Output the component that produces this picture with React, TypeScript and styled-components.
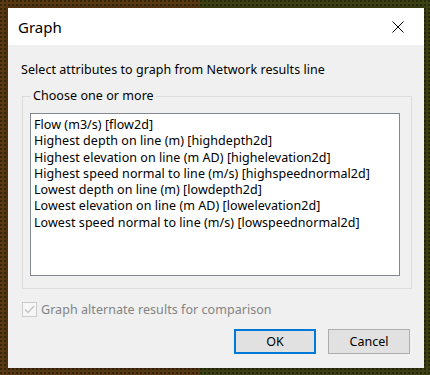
import React from "react";
import styled, { createGlobalStyle } from "styled-components";

const GlobalStyle = createGlobalStyle`
  html, body {
    margin: 0;
    padding: 0;
  }
  body {
    width: 430px;
    height: 375px;
    overflow: hidden;
    background:
      radial-gradient(circle at 1px 1px, rgba(20, 22, 4, 0.55) 0.8px, transparent 1.2px) 200px 0 / 4px 4px,
      linear-gradient(90deg, #5c3a14 0, #5c3a14 200px, #3e4214 200px, #3e4214 100%);
    font-family: "Noto Sans", "Open Sans", sans-serif;
  }
`;

const Desktop = styled.div`
  padding: 8px 6px 7px 8px;
`;

const Window = styled.div`
  width: 416px;
  height: 360px;
  background: #f0f0f0;
  display: flex;
  flex-direction: column;
  box-shadow: 0 0 6px rgba(0, 0, 0, 0.35);
`;

const TitleBar = styled.div`
  height: 37px;
  flex: none;
  background: #ffffff;
  display: flex;
  align-items: center;
  justify-content: space-between;
  padding: 0 0 0 10px;
`;

const Title = styled.span`
  font-size: 15px;
  color: #000;
`;

const CloseButton = styled.div`
  width: 46px;
  height: 37px;
  display: flex;
  align-items: center;
  justify-content: center;
  margin-right: 3px;
`;

const Body = styled.div`
  flex: 1;
  display: flex;
  flex-direction: column;
  padding: 17px 12px 0 14px;
  font-size: 12.5px;
  color: #000;
`;

const Prompt = styled.div`
  margin-left: -1px;
  line-height: 15px;
  height: 15px;
  letter-spacing: 0.05px;
`;

const Group = styled.fieldset`
  margin: 12px 0 0 0;
  padding: 0 11px 12px 7px;
  border: 1px solid #dcdcdc;
  box-sizing: border-box;
`;

const Legend = styled.legend`
  padding: 0 2px;
  margin-left: 1px;
  line-height: 14px;
  letter-spacing: 0.05px;
`;

const ListBox = styled.div`
  margin-top: 10px;
  height: 163px;
  box-sizing: border-box;
  background: #ffffff;
  border: 1px solid #828790;
  padding: 3px 3px;
  display: flex;
  flex-direction: column;
`;

const ListItem = styled.div`
  height: 16.3px;
  line-height: 16px;
  white-space: nowrap;
  letter-spacing: 0.05px;
`;

const CheckRow = styled.div`
  margin-top: 12px;
  display: flex;
  align-items: center;
  gap: 4px;
  height: 16px;
`;

const CheckBox = styled.div`
  width: 13px;
  height: 13px;
  border: 1px solid #cccccc;
  background: #f6f6f6;
  display: flex;
  align-items: center;
  justify-content: center;
`;

const CheckLabel = styled.span`
  color: #838383;
  letter-spacing: 0.05px;
`;

const ButtonRow = styled.div`
  margin-top: 12px;
  display: flex;
  justify-content: flex-end;
  gap: 12px;
  padding-right: 2px;
`;

const Button = styled.div<{ $default?: boolean }>`
  width: 82px;
  height: 25px;
  box-sizing: border-box;
  background: #e1e1e1;
  border: ${(p) => (p.$default ? "2px solid #0078d7" : "1px solid #adadad")};
  display: flex;
  align-items: center;
  justify-content: center;
`;

const items = [
  "Flow (m3/s) [flow2d]",
  "Highest depth on line (m) [highdepth2d]",
  "Highest elevation on line (m AD) [highelevation2d]",
  "Highest speed normal to line (m/s) [highspeednormal2d]",
  "Lowest depth on line (m) [lowdepth2d]",
  "Lowest elevation on line (m AD) [lowelevation2d]",
  "Lowest speed normal to line (m/s) [lowspeednormal2d]",
];

export default function App() {
  return (
    <>
      <GlobalStyle />
      <Desktop>
        <Window>
          <TitleBar>
            <Title>Graph</Title>
            <CloseButton>
              <svg width="12" height="12" viewBox="0 0 12 12">
                <path d="M0.5 0.5 L11.5 11.5 M11.5 0.5 L0.5 11.5" stroke="#000" strokeWidth="1" />
              </svg>
            </CloseButton>
          </TitleBar>
          <Body>
            <Prompt>Select attributes to graph from Network results line</Prompt>
            <Group>
              <Legend>Choose one or more</Legend>
              <ListBox>
                {items.map((t) => (
                  <ListItem key={t}>{t}</ListItem>
                ))}
              </ListBox>
            </Group>
            <CheckRow>
              <CheckBox>
                <svg width="11" height="9" viewBox="0 0 11 9">
                  <path d="M1 4.5 L4 7.5 L10 1" stroke="#c4c4c4" strokeWidth="1.3" fill="none" />
                </svg>
              </CheckBox>
              <CheckLabel>Graph alternate results for comparison</CheckLabel>
            </CheckRow>
            <ButtonRow>
              <Button $default>OK</Button>
              <Button>Cancel</Button>
            </ButtonRow>
          </Body>
        </Window>
      </Desktop>
    </>
  );
}
